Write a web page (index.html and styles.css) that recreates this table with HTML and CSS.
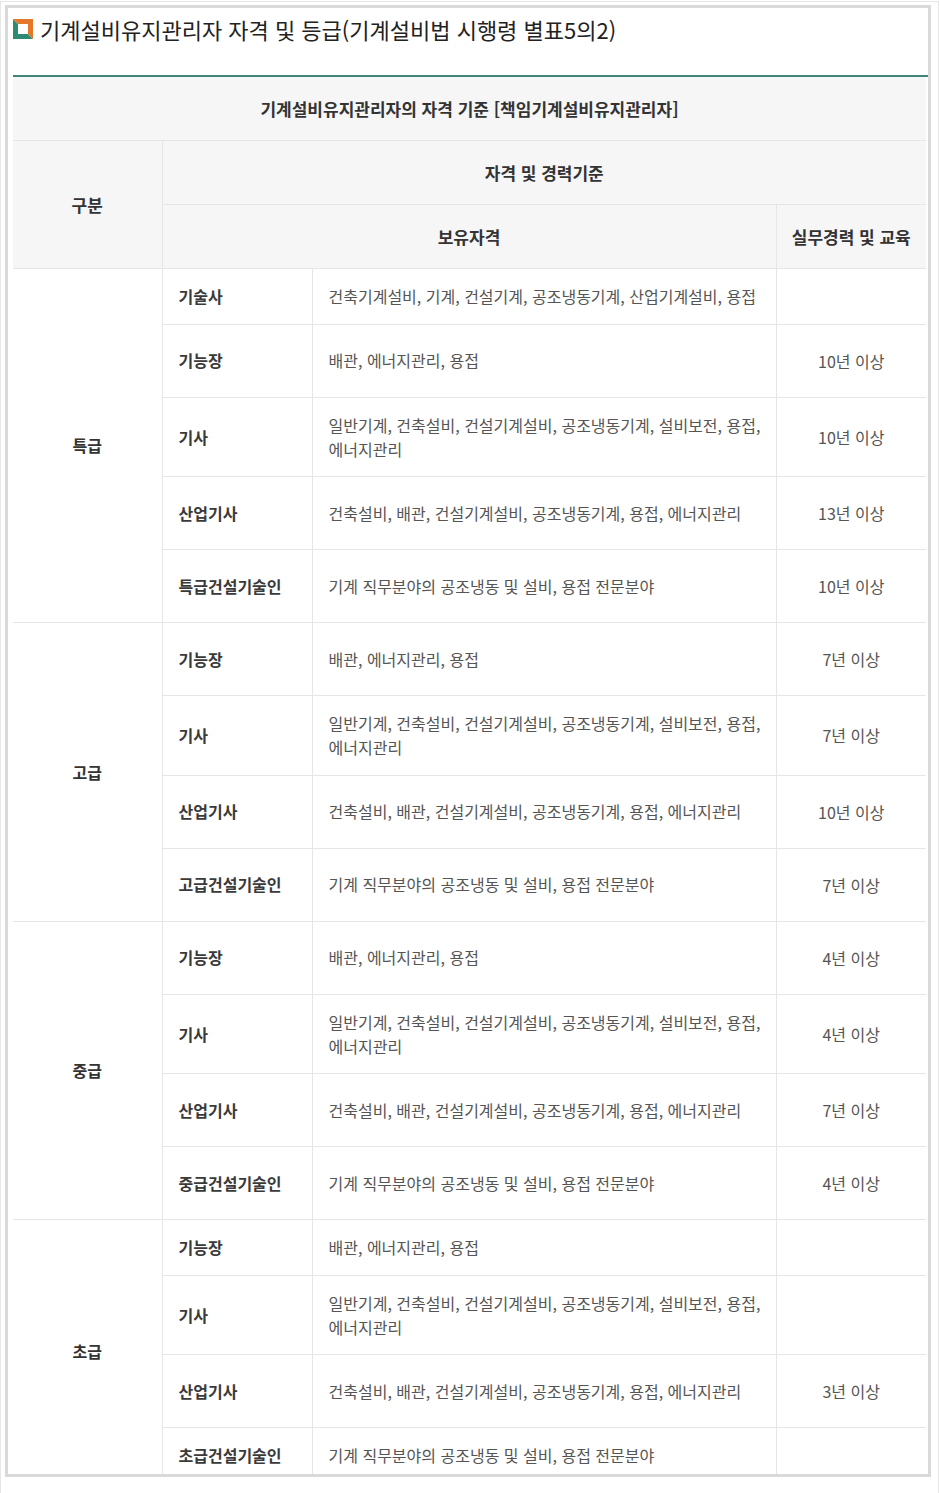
FILE: index.html
```html
<!DOCTYPE html>
<html lang="ko">
<head>
<meta charset="utf-8">
<title>기계설비유지관리자 자격 및 등급</title>
<link rel="stylesheet" href="styles.css">
</head>
<body>
<div class="outer">
  <div class="box">
    <div class="title">
      <svg class="icon" viewBox="0 0 20 20" width="20" height="20" aria-hidden="true">
        <polygon points="0,0 20,20 0,20" fill="#2f8a74"/>
        <polygon points="0,0 20,0 20,20" fill="#e5772a"/>
        <rect x="5" y="5" width="10" height="10" fill="#ffffff"/>
      </svg>
      <h1>기계설비유지관리자 자격 및 등급(기계설비법 시행령 별표5의2)</h1>
    </div>
    <table class="grid">
      <colgroup>
        <col class="c1"><col class="c2"><col class="c3"><col class="c4">
      </colgroup>
      <thead>
        <tr><th colspan="4" class="cap">기계설비유지관리자의 자격 기준 [책임기계설비유지관리자]</th></tr>
        <tr><th rowspan="2">구분</th><th colspan="3">자격 및 경력기준</th></tr>
        <tr><th colspan="2">보유자격</th><th>실무경력 및 교육</th></tr>
      </thead>
      <tbody>
        <tr><td rowspan="5" class="grade">특급</td><td class="name">기술사</td><td class="desc">건축기계설비, 기계, 건설기계, 공조냉동기계, 산업기계설비, 용접</td><td class="val"></td></tr>
        <tr><td class="name">기능장</td><td class="desc">배관, 에너지관리, 용접</td><td class="val has">10년 이상</td></tr>
        <tr><td class="name">기사</td><td class="desc">일반기계, 건축설비, 건설기계설비, 공조냉동기계, 설비보전, 용접,<br>에너지관리</td><td class="val has">10년 이상</td></tr>
        <tr><td class="name">산업기사</td><td class="desc">건축설비, 배관, 건설기계설비, 공조냉동기계, 용접, 에너지관리</td><td class="val has">13년 이상</td></tr>
        <tr><td class="name">특급건설기술인</td><td class="desc">기계 직무분야의 공조냉동 및 설비, 용접 전문분야</td><td class="val has">10년 이상</td></tr>

        <tr><td rowspan="4" class="grade">고급</td><td class="name">기능장</td><td class="desc">배관, 에너지관리, 용접</td><td class="val has">7년 이상</td></tr>
        <tr><td class="name">기사</td><td class="desc">일반기계, 건축설비, 건설기계설비, 공조냉동기계, 설비보전, 용접,<br>에너지관리</td><td class="val has">7년 이상</td></tr>
        <tr><td class="name">산업기사</td><td class="desc">건축설비, 배관, 건설기계설비, 공조냉동기계, 용접, 에너지관리</td><td class="val has">10년 이상</td></tr>
        <tr><td class="name">고급건설기술인</td><td class="desc">기계 직무분야의 공조냉동 및 설비, 용접 전문분야</td><td class="val has">7년 이상</td></tr>

        <tr><td rowspan="4" class="grade">중급</td><td class="name">기능장</td><td class="desc">배관, 에너지관리, 용접</td><td class="val has">4년 이상</td></tr>
        <tr><td class="name">기사</td><td class="desc">일반기계, 건축설비, 건설기계설비, 공조냉동기계, 설비보전, 용접,<br>에너지관리</td><td class="val has">4년 이상</td></tr>
        <tr><td class="name">산업기사</td><td class="desc">건축설비, 배관, 건설기계설비, 공조냉동기계, 용접, 에너지관리</td><td class="val has">7년 이상</td></tr>
        <tr><td class="name">중급건설기술인</td><td class="desc">기계 직무분야의 공조냉동 및 설비, 용접 전문분야</td><td class="val has">4년 이상</td></tr>

        <tr><td rowspan="4" class="grade">초급</td><td class="name">기능장</td><td class="desc">배관, 에너지관리, 용접</td><td class="val"></td></tr>
        <tr><td class="name">기사</td><td class="desc">일반기계, 건축설비, 건설기계설비, 공조냉동기계, 설비보전, 용접,<br>에너지관리</td><td class="val"></td></tr>
        <tr><td class="name">산업기사</td><td class="desc">건축설비, 배관, 건설기계설비, 공조냉동기계, 용접, 에너지관리</td><td class="val has">3년 이상</td></tr>
        <tr><td class="name">초급건설기술인</td><td class="desc">기계 직무분야의 공조냉동 및 설비, 용접 전문분야</td><td class="val"></td></tr>
      </tbody>
    </table>
  </div>
</div>
</body>
</html>
```

FILE: styles.css
```css
html, body {
  margin: 0;
  padding: 0;
  background: #ffffff;
}

body {
  font-family: "Noto Sans CJK KR", "Noto Sans", sans-serif;
  color: #555555;
}

.outer {
  margin: 1px 1px 0 0;
  border: 1px solid #e6e6e6;
  border-bottom: 0;
  padding: 3px 7px 0 4px;
  height: 1500px;
}

.box {
  border: 3px solid #d9d9d9;
  height: 1466px;
  overflow: hidden;
  padding-left: 5px;
  background: #ffffff;
}

.title {
  display: flex;
  align-items: center;
  gap: 7px;
  height: 32px;
  padding-top: 5px;
  padding-bottom: 30px;
  border-bottom: 2px solid #3f8579;
}

.icon {
  flex: none;
  margin-top: 0;
}

.title h1 {
  margin: 0;
  font-size: 22px;
  line-height: 32px;
  font-weight: 400;
  color: #222222;
}

.grid {
  width: 913px;
  border-collapse: collapse;
  border-style: hidden;
  table-layout: fixed;
  font-size: 16px;
  line-height: 24px;
}

.c1 { width: 149px; }
.c2 { width: 150px; }
.c3 { width: 464px; }
.c4 { width: 150px; }

.grid th,
.grid td {
  border: 1px solid #e6e6e6;
  vertical-align: middle;
}

.grid th {
  background: #f6f6f6;
  color: #333333;
  font-size: 17px;
  font-weight: 700;
  text-align: center;
  padding: 20px 8px 19px;
}

.grid td {
  padding: 15px 16px 15.5px;
}

.grid td.grade {
  text-align: center;
  font-weight: 700;
  color: #333333;
}

.grid td.name {
  font-weight: 700;
  color: #3a3a3a;
}

.grid td.desc {
  color: #555555;
  padding-right: 6px;
}

.grid td.val {
  text-align: center;
  color: #555555;
}

.grid td.val.has {
  padding-top: 24px;
  padding-bottom: 24px;
}
```
